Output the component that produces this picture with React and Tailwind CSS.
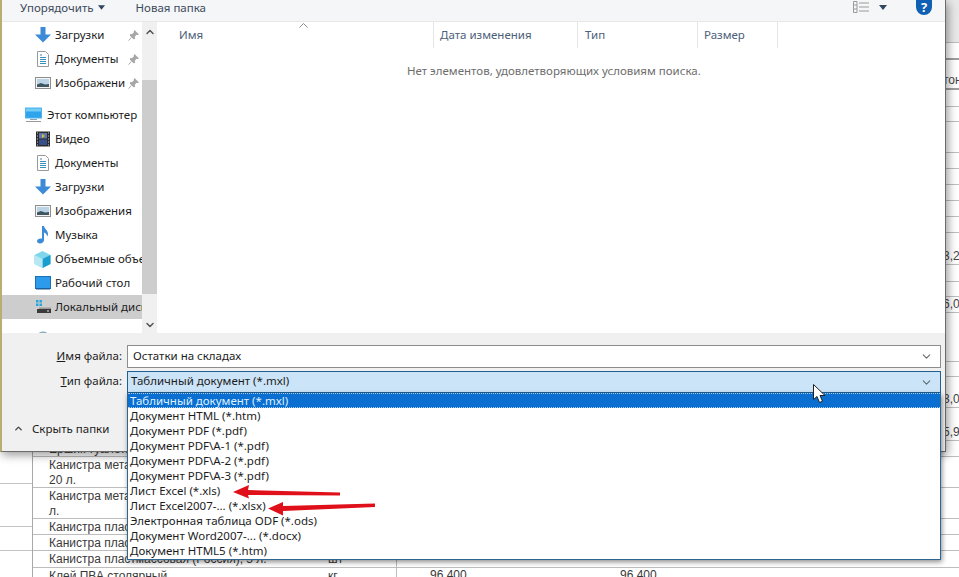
import React from 'react'
import { ChevronUp, ChevronDown } from 'lucide-react'

const sheetRows = [
  { h: 43, band: true },
  { h: 17, thick: true },
  { h: 30, edge: '.\nтон', thick: true },
  { h: 17 }, { h: 15 }, { h: 31 }, { h: 16 }, { h: 16 }, { h: 16 }, { h: 16 }, { h: 16 },
  { h: 32, edge: '3,2' }, { h: 17 }, { h: 15 }, { h: 16, edge: '6,0' },
  { h: 49 }, { h: 15 }, { h: 31, edge: '3,0' }, { h: 33, edge: '5,9' },
  { h: 16, name: 'Ершик туалетный' },
  { h: 31, name: 'Канистра металлическая', name2: '20 л.' },
  { h: 31, name: 'Канистра металлическая, 10', name2: 'л.' },
  { h: 16, name: 'Канистра пластмассовая, 10 л.' },
  { h: 16, name: 'Канистра пластмассовая, 20 л.' },
  { h: 17, name: 'Канистра пластмассовая (Россия), 5 л.', unit: 'шт' },
  { h: 16, name: 'Клей ПВА столярный', unit: 'кг', a: '96,400', b: '96,400' },
]

const fileTypes = [
  'Документ HTML (*.htm)',
  'Документ PDF (*.pdf)',
  'Документ PDF\\A-1 (*.pdf)',
  'Документ PDF\\A-2 (*.pdf)',
  'Документ PDF\\A-3 (*.pdf)',
  'Лист Excel (*.xls)',
  'Лист Excel2007-... (*.xlsx)',
  'Электронная таблица ODF (*.ods)',
  'Документ Word2007-... (*.docx)',
  'Документ HTML5 (*.htm)',
]

function DownloadIcon() {
  return (
    <svg width="16" height="16" viewBox="0 0 16 16">
      <path d="M5.500 0h5v7.500H16L8 15.500 0 7.500h5.500z" fill="#3d8ad6" />
    </svg>
  )
}

function DocIcon() {
  return (
    <svg width="16" height="16" viewBox="0 0 16 16">
      <path d="M2.500.500h8l3 3v12h-11z" fill="#fdfdfd" stroke="#9a9a9a" />
      <path d="M5 4h2M5 6.500h6M5 8.500h6M5 10.500h6M5 12.500h6" stroke="#3a8fb8" strokeWidth="1" />
    </svg>
  )
}

function PictureIcon() {
  return (
    <svg width="16" height="16" viewBox="0 0 16 16">
      <rect x="0.500" y="2.500" width="15" height="11" fill="#f4f4f4" stroke="#8e8e8e" />
      <rect x="2" y="4" width="12" height="8" fill="#bcd3e6" />
      <path d="M2 9.500l4-1.500 4 1.500 4-.5V12H2z" fill="#3f5561" />
    </svg>
  )
}

function MonitorIcon() {
  return (
    <svg width="17" height="16" viewBox="0 0 17 16">
      <rect x="0.500" y="1" width="16" height="10" fill="#2ea4ec" stroke="#4fb4ee" />
      <rect x="1" y="1.500" width="15" height="3" fill="#74cdf7" />
      <path d="M5 12h7v1H5z" fill="#8fa3b2" />
      <path d="M1 14.500h15" stroke="#9a9a9a" />
    </svg>
  )
}

function VideoIcon() {
  return (
    <svg width="16" height="16" viewBox="0 0 16 16">
      <rect x="1" y="0.500" width="14" height="15" fill="#2b2b2b" />
      <rect x="4" y="2" width="8" height="5.500" fill="#5f78a8" />
      <rect x="4" y="8.500" width="8" height="5.500" fill="#38508a" />
      <path d="M7 3l3 2-3 2z" fill="#d8c04a" />
      <path d="M2 2h1M2 5h1M2 8h1M2 11h1M2 14h1M13 2h1M13 5h1M13 8h1M13 11h1M13 14h1" stroke="#cfcfcf" />
    </svg>
  )
}

function MusicIcon() {
  return (
    <svg width="16" height="18" viewBox="0 0 16 18">
      <path d="M7 0h2c.3 3 4 4 4 8 0 1-.4 2-1 2.500.2-2-1.500-3.500-3-4V14c0 2-2 3.500-4 3.500S2 16.500 2 15s2-3 5-2.500z" fill="#3d8ad6" />
    </svg>
  )
}

function CubeIcon() {
  return (
    <svg width="17" height="17" viewBox="0 0 17 17">
      <path d="M8.500 0l8 4v9l-8 4-8-4V4z" fill="#7fd6ea" />
      <path d="M8.500 8l8-4v9l-8 4z" fill="#1b9dd0" />
      <path d="M.500 4l8 4v9l-8-4z" fill="#b5e8f3" />
    </svg>
  )
}

function DesktopIcon() {
  return (
    <svg width="16" height="14" viewBox="0 0 16 14">
      <rect x="0.500" y="0.500" width="15" height="12" fill="#2d9bec" stroke="#1a6fb5" />
      <path d="M1 12h14v1.500H1z" fill="#1b5e99" />
    </svg>
  )
}

function DiskIcon() {
  return (
    <svg width="16" height="16" viewBox="0 0 16 16">
      <path d="M1 1h2.500v2.500H1zM4.500 1H7v2.500H4.500zM1 4.500h2.500V7H1zM4.500 4.500H7V7H4.500z" fill="#27a5dc" />
      <rect x="2" y="10" width="14" height="4" fill="#3a3a3a" />
      <rect x="4" y="8.500" width="12" height="1.500" fill="#9a9a9a" />
      <path d="M12 12h2" stroke="#e6e6e6" />
    </svg>
  )
}

function NetworkIcon() {
  return (
    <svg width="16" height="16" viewBox="0 0 16 16">
      <circle cx="8" cy="8" r="7" fill="#8fc4dc" stroke="#7a9fb2" />
    </svg>
  )
}

function Pin() {
  return (
    <svg width="11" height="11" viewBox="0 0 11 11" className="absolute left-[126px] top-[7px]">
      <path d="M6.500 0L11 4.500 9.800 5 8.500 4.800 6.800 6.800 7 9 5.500 9.300 1.800 5.500 2 4.200 4.200 4 6 2.300 5.800 1z" fill="#a6a6a6" />
      <path d="M3.500 7.500L.500 10.500" stroke="#a6a6a6" />
    </svg>
  )
}

function NavRow({ icon, label, pinned, selected, indent = 'pl-[32px]', gap = 'gap-[4px]' }) {
  return (
    <div className={`relative h-[24px] shrink-0 flex items-center ${indent} ${gap} whitespace-nowrap overflow-hidden ${selected ? 'bg-[#cdcdcd]' : ''}`}>
      <span className="w-[17px] h-[18px] flex items-center justify-center shrink-0">{icon}</span>
      <span className={pinned ? 'w-[70px] overflow-hidden' : ''}>{label}</span>
      {pinned && <Pin />}
    </div>
  )
}

function Sidebar() {
  return (
    <div className="w-[140px] shrink-0 overflow-hidden text-[11.5px] text-[#1c1c1c] flex flex-col">
      <div className="h-[1px] shrink-0" />
      <NavRow icon={<DownloadIcon />} label="Загрузки" pinned />
      <NavRow icon={<DocIcon />} label="Документы" pinned />
      <NavRow icon={<PictureIcon />} label="Изображени" pinned />
      <div className="h-[8px] shrink-0" />
      <NavRow icon={<MonitorIcon />} label="Этот компьютер" indent="pl-[23px]" gap="gap-[5px]" />
      <NavRow icon={<VideoIcon />} label="Видео" />
      <NavRow icon={<DocIcon />} label="Документы" />
      <NavRow icon={<DownloadIcon />} label="Загрузки" />
      <NavRow icon={<PictureIcon />} label="Изображения" />
      <NavRow icon={<MusicIcon />} label="Музыка" />
      <NavRow icon={<CubeIcon />} label="Объемные объекты" />
      <NavRow icon={<DesktopIcon />} label="Рабочий стол" />
      <NavRow icon={<DiskIcon />} label="Локальный диск (C:)" selected />
      <div className="h-[8px] shrink-0" />
      <NavRow icon={<NetworkIcon />} label="" />
    </div>
  )
}

function Scrollbar() {
  return (
    <div className="w-[15px] shrink-0 bg-[#f0f0f0] flex flex-col items-center">
      <div className="h-[58px] w-full flex justify-center pt-[4px]">
        <ChevronUp size={12} strokeWidth={3} className="text-[#555555]" />
      </div>
      <div className="h-[214px] w-full bg-[#cdcdcd]" />
      <div className="flex-1 w-full flex justify-center items-end pb-[2px]">
        <ChevronDown size={12} strokeWidth={3} className="text-[#555555]" />
      </div>
    </div>
  )
}

function ColumnHeader({ label, className }) {
  return (
    <div className={`h-[26px] flex items-center border-r border-[#e5e5e5] ${className}`}>{label}</div>
  )
}

function FileList() {
  return (
    <div className="relative flex-1 ml-[1px] bg-white">
      <div className="flex text-[11.5px] text-[#4c607a]">
        <ColumnHeader label="Имя" className="w-[276px] pl-[21px]" />
        <ColumnHeader label="Дата изменения" className="w-[144px] pl-[6px]" />
        <ColumnHeader label="Тип" className="w-[120px] pl-[7px]" />
        <ColumnHeader label="Размер" className="w-[80px] pl-[6px]" />
      </div>
      <svg width="9" height="5" viewBox="0 0 9 5" className="absolute left-[141px] top-[1px]">
        <path d="M.500 4.500l4-4 4 4" fill="none" stroke="#8b8b8b" />
      </svg>
      <div className="pt-[14px] pl-[249px] text-[11.5px] text-[#6d6d6d] whitespace-nowrap">
        Нет элементов, удовлетворяющих условиям поиска.
      </div>
    </div>
  )
}

function Toolbar() {
  return (
    <div className="h-[22px] shrink-0 bg-[#f5f6f7] border-b border-[#e8e8e8] flex items-start text-[11.5px] text-[#3c4a5c] leading-[14px]">
      <span className="ml-[18px] pt-[1px]">Упорядочить</span>
      <svg width="7" height="5" viewBox="0 0 8 5" className="ml-[4px] mt-[5px]">
        <path d="M0 0h8L4 5z" fill="#2f4560" />
      </svg>
      <span className="ml-[31px] pt-[1px]">Новая папка</span>
      <div className="flex-1" />
      <svg width="16" height="12" viewBox="0 0 16 12" className="mt-[1px]">
        <path d="M.500.500h3.500v11H.500zM.500 4h3.500M.500 8h3.500" fill="none" stroke="#9a9a9a" />
        <path d="M6 2h10M6 6h10M6 10h10" stroke="#9a9a9a" />
      </svg>
      <svg width="8" height="5" viewBox="0 0 8 5" className="ml-[10px] mt-[5px]">
        <path d="M0 0h8L4 5z" fill="#2f4560" />
      </svg>
      <div className="ml-[29px] mr-[13px] w-[16px] h-[15px] rounded-b-full bg-[#0f5fb5] text-white text-[13px] font-bold text-center leading-[15px]">
        ?
      </div>
    </div>
  )
}

function FileNameFields() {
  return (
    <div className="h-[118px] shrink-0 bg-[#f0f0f0] pt-[12px] text-[11.5px] text-[#1c1c1c]">
      <div className="flex items-center h-[23px]">
        <span className="w-[120px] text-right pb-[2px]"><u>И</u>мя файла:</span>
        <div className="ml-[5px] w-[814px] h-[23px] bg-white border border-[#8d8d8d] flex items-center pl-[5px] pr-[7px] justify-between">
          <span className="pb-[2px]">Остатки на складах</span>
          <ChevronDown size={13} className="text-[#6a6a6a]" />
        </div>
      </div>
      <div className="flex items-center h-[22px] mt-[3px]">
        <span className="w-[120px] text-right pb-[2px]"><u>Т</u>ип файла:</span>
        <div className="ml-[5px] w-[814px] h-[22px] bg-[#cce4f7] border border-[#1f5f92] flex items-center pl-[3px] pr-[7px] justify-between">
          <span className="pb-[2px]">Табличный документ (*.mxl)</span>
          <ChevronDown size={13} className="text-[#5a6b78]" />
        </div>
      </div>
      <div className="flex items-center mt-[27px] ml-[11px] gap-[8px]">
        <ChevronUp size={11} strokeWidth={3} className="text-[#444444]" />
        <span>Скрыть папки</span>
      </div>
    </div>
  )
}

function TypeDropdown() {
  return (
    <div className="absolute left-[127px] top-[393px] w-[814px] h-[167px] bg-white border border-[#2f6690] border-t-0 shadow-[1px_2px_5px_rgba(0,0,0,0.45)] text-[11.5px] text-[#1c1c1c] z-20">
      <div className="h-[15px] pl-[2px] bg-[#0a6fd1] text-[#dff0ff] border-y border-dotted border-[#a8cdf0] leading-[13px]">
        Табличный документ (*.mxl)
      </div>
      {fileTypes.map((item) => (
        <div key={item} className="h-[15px] pl-[2px] whitespace-nowrap leading-[15px]">{item}</div>
      ))}
    </div>
  )
}

function Sheet() {
  return (
    <div className="flex h-full font-['Liberation_Sans',sans-serif] text-[12px] leading-[15px] text-[#3a3a3a]">
      <div className="w-[33px] shrink-0 border-r border-[#a8a8a8]">
        <div className="h-[484px] border-b border-[#c4c4c4]" />
        <div className="h-[43px] border-b border-[#c4c4c4]" />
        <div className="h-[24px] border-b border-[#c4c4c4]" />
      </div>
      <div className="flex-1 flex flex-col">
        {sheetRows.map((row, i) => (
          <div
            key={i}
            style={{ height: row.h }}
            className={`shrink-0 flex ${row.thick ? 'border-b-2 border-[#9e9e9e]' : 'border-b border-[#bdbdbd]'} ${row.band ? 'bg-[#e8e8e8]' : ''}`}
          >
            <div className="w-[295px] shrink-0 pl-[16px] pt-[1px] whitespace-nowrap">
              {row.name}
              {row.name2 && <br />}
              {row.name2}
            </div>
            <div className="w-[69px] shrink-0 pt-[1px] border-r border-[#bdbdbd]">{row.unit}</div>
            <div className="w-[223px] shrink-0 pl-[33px]">{row.a}</div>
            <div className="w-[323px] shrink-0">{row.b}</div>
            <div className="flex-1 overflow-hidden whitespace-pre self-end text-[12px] leading-[13px] pb-[1px] text-[#444444]">{row.edge}</div>
          </div>
        ))}
      </div>
    </div>
  )
}

function Arrows() {
  return (
    <svg width="150" height="31" viewBox="0 0 150 31" className="absolute left-[230px] top-[485px] z-30">
      <path d="M3 7L19 0 18 5 110 7.500 110 10.500 18 10 19 13.500z" fill="#e0101a" />
      <path d="M38 23.500L53 17 53 21 145 18.500 145 22 53 26 53 30.500z" fill="#e0101a" />
    </svg>
  )
}

function Cursor() {
  return (
    <svg width="14" height="20" viewBox="0 0 14 20" className="absolute left-[813px] top-[384px] z-30">
      <path d="M.500.500v15l3.500-3 2.500 6 3-1.300-2.500-5.700h5z" fill="#fff" stroke="#222" />
    </svg>
  )
}

export default function App() {
  return (
    <div className="relative w-[959px] h-[577px] overflow-hidden bg-white font-['Noto_Sans',sans-serif]">
      <Sheet />

      <div className="absolute left-0 top-0 w-[946px] h-[452px] bg-white border-l-2 border-l-[#b9ad72] border-r border-r-[#6b6b6b] border-b border-b-[#6b6b6b] shadow-[2px_3px_9px_rgba(0,0,0,0.4)] flex flex-col z-10">
        <Toolbar />
        <div className="flex flex-1 min-h-0">
          <Sidebar />
          <Scrollbar />
          <FileList />
        </div>
        <FileNameFields />
      </div>

      <TypeDropdown />
      <Arrows />
      <Cursor />
    </div>
  )
}
